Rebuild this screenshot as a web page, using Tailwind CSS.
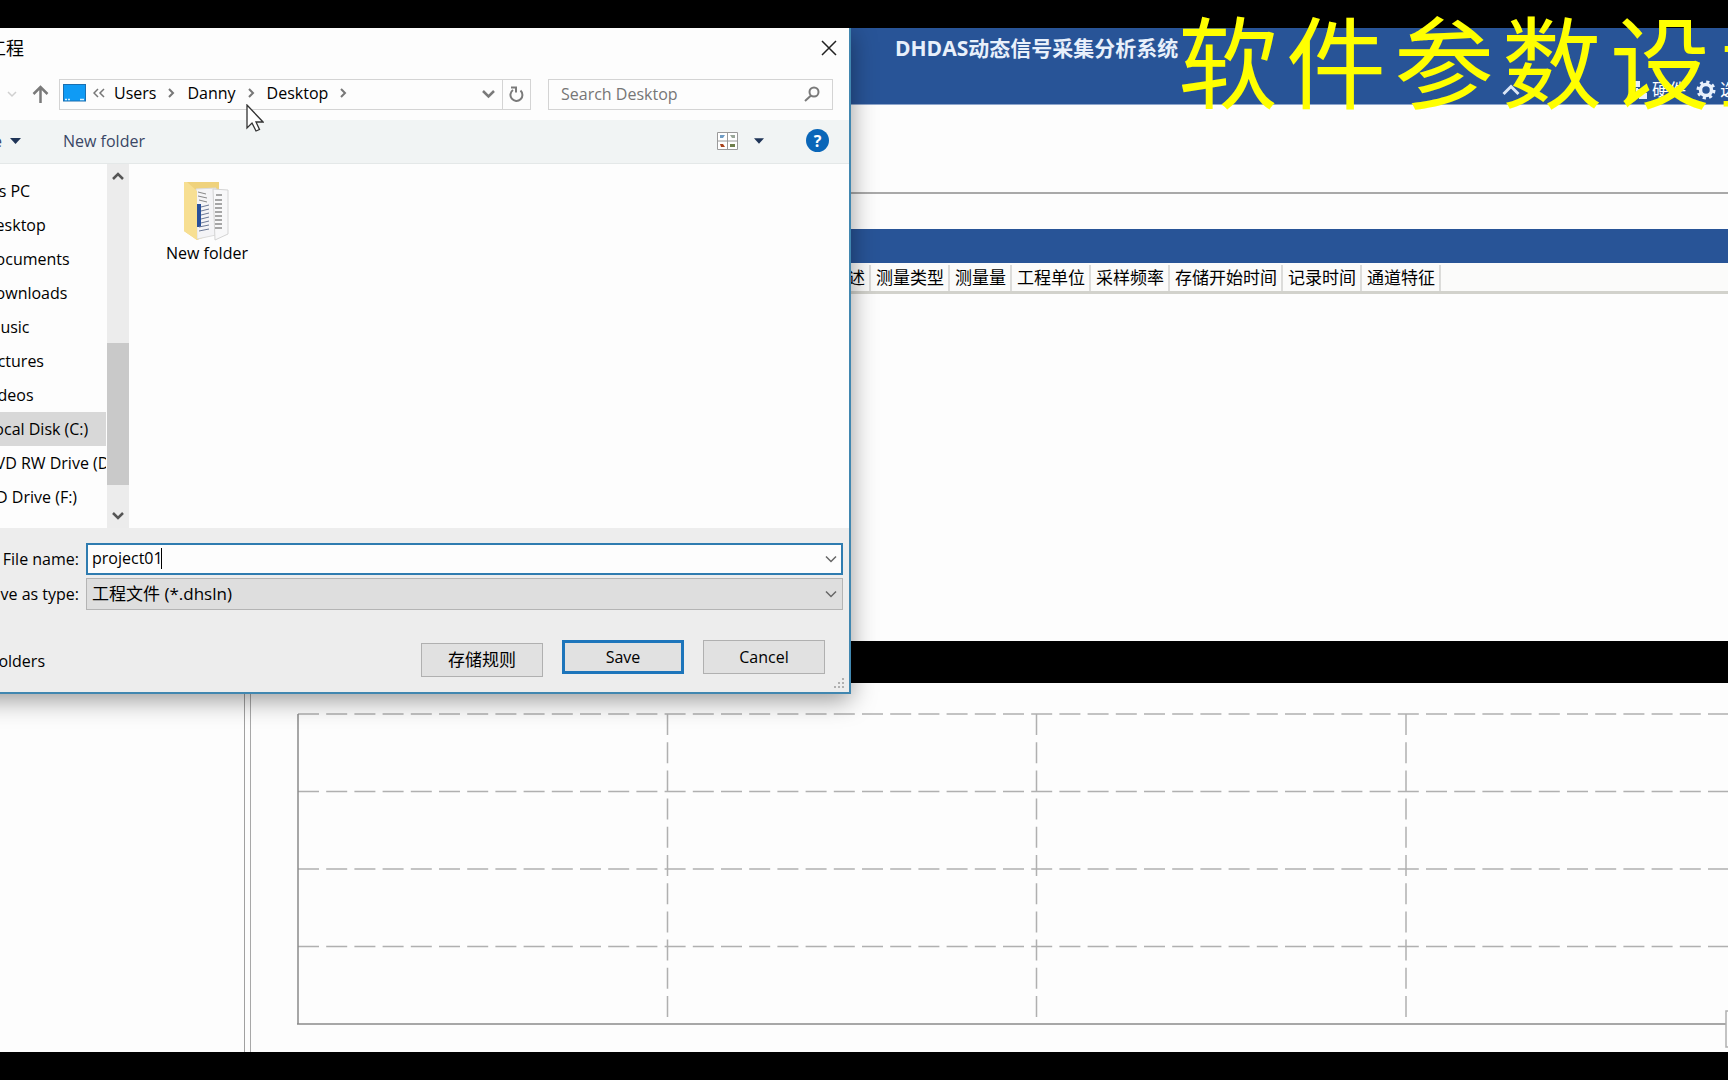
<!DOCTYPE html>
<html lang="zh-CN">
<head>
    <meta charset="UTF-8" />
    <meta name="viewport" content="width=device-width, initial-scale=1" />
    <title>DHDAS动态信号采集分析系统</title>
    <script src="https://cdn.jsdelivr.net/npm/@tailwindcss/browser@4"></script>
</head>
<body class="relative flex min-h-screen flex-col overflow-hidden bg-black py-7 font-['Open_Sans','Noto_Sans_CJK_SC',sans-serif] text-black">

    <!-- Main window: header, channel table -->
    <section class="flex h-[613px] flex-col overflow-hidden bg-[#fdfdfd]">
        <header class="flex h-[77px] shrink-0 flex-col justify-between border-b border-[#8fa6cb] bg-[#285497] text-white">
            <h1 class="pl-[895px] pt-1 text-[21px] leading-8 font-bold text-[#e8f0fb]">DHDAS动态信号采集分析系统</h1>
            <nav class="-mr-[26px] flex h-7 items-center justify-end text-[17px] leading-7">
                <button type="button" class="mr-28" aria-label="收起">
                    <svg class="h-4 w-[18px]" viewBox="0 0 18 16" fill="none" stroke="#dbe6f6" stroke-width="3"><path d="M1.500 12 9 4.500l7.500 7.500" /></svg>
                </button>
                <button type="button" class="mr-[10px] flex items-center gap-1">
                    <svg class="h-[18px] w-4" viewBox="0 0 16 18" fill="#e8f0fb">
                        <rect x="2" y="0" width="6" height="6" /><rect x="10" y="6" width="4" height="4" /><rect x="7" y="12" width="8" height="6" />
                        <path d="M4 7h2v7h1v2H4zM6 8h4v1H6z" />
                    </svg>
                    硬件
                </button>
                <button type="button" class="flex items-center gap-1">
                    <svg class="size-5" viewBox="0 0 20 20" fill="none" stroke="#e8f0fb">
                        <circle cx="10" cy="10" r="5.500" stroke-width="3.500" />
                        <circle cx="10" cy="10" r="8" stroke-width="3" stroke-dasharray="3.140 3.140" />
                    </svg>
                    选项
                </button>
            </nav>
        </header>
        <div class="h-[89px] shrink-0 border-b-2 border-[#a9a9a9]"></div>
        <div class="h-[35px] shrink-0"></div>
        <div class="h-[34px] shrink-0 bg-[#285497]"></div>
        <div class="border-b-3 border-[#d2d2cc] bg-[#fbfbfa] pt-0.5">
            <table class="border-separate border-spacing-0 text-[17px] leading-[26px] whitespace-nowrap">
                <thead>
                    <tr>
                        <th class="w-[871px] min-w-[871px] border-r-2 border-[#dcdcda] pr-1 text-right font-normal">述</th>
                        <th class="border-r-2 border-[#dcdcda] pr-1 pl-[5px] font-normal">测量类型</th>
                        <th class="border-r-2 border-[#dcdcda] pr-1 pl-[5px] font-normal">测量量</th>
                        <th class="border-r-2 border-[#dcdcda] pr-1 pl-[5px] font-normal">工程单位</th>
                        <th class="border-r-2 border-[#dcdcda] pr-1 pl-[5px] font-normal">采样频率</th>
                        <th class="border-r-2 border-[#dcdcda] pr-1 pl-[5px] font-normal">存储开始时间</th>
                        <th class="border-r-2 border-[#dcdcda] pr-1 pl-[5px] font-normal">记录时间</th>
                        <th class="border-r-2 border-[#dcdcda] pr-1 pl-[5px] font-normal">通道特征</th>
                    </tr>
                </thead>
            </table>
        </div>
    </section>

    <!-- Signal plot -->
    <section class="mt-[42px] flex flex-1 bg-[#fdfdfd]">
        <div class="w-[251px] shrink-0 border-r border-[#a8a8a8] pr-[5px]">
            <div class="h-full border-r border-[#a0a0a0]"></div>
        </div>
        <svg class="h-[369px] min-w-0 flex-1" fill="none" stroke="#b0b0b0" stroke-width="1.500">
            <g stroke-dasharray="21 7.200">
                <line x1="47" y1="31" x2="100%" y2="31" />
                <line x1="47" y1="108.500" x2="100%" y2="108.500" />
                <line x1="47" y1="186" x2="100%" y2="186" />
                <line x1="47" y1="263.500" x2="100%" y2="263.500" />
                <line x1="416.500" y1="31" x2="416.500" y2="341" />
                <line x1="785.500" y1="31" x2="785.500" y2="341" />
                <line x1="1155" y1="31" x2="1155" y2="341" />
            </g>
            <line x1="47" y1="31" x2="47" y2="341" stroke="#8a8a8a" />
            <line x1="46" y1="341" x2="100%" y2="341" stroke="#8a8a8a" />
            <svg x="100%" overflow="visible"><rect x="-2" y="328" width="40" height="36" fill="#fdfdfd" /></svg>
        </svg>
    </section>

    <!-- Save dialog, moved partly past the left edge of the screen -->
    <div role="dialog" aria-label="工程" class="absolute top-7 -left-24 flex w-[947px] flex-col border-r-2 border-b-2 border-[#4187b0] bg-[#fdfdfd] text-[16px] leading-6 shadow-[0_6px_24px_rgba(0,0,0,0.4)]">
        <div class="flex h-10 items-center justify-between pr-3 pl-[84px]">
            <span class="text-[18px]">工程</span>
            <button type="button" aria-label="Close">
                <svg class="size-4" viewBox="0 0 16 16" fill="none" stroke="#222" stroke-width="1.500"><path d="M1 1l14 14M15 1 1 15" /></svg>
            </button>
        </div>

        <div class="flex h-[52px] items-center pr-4 pl-[102px]">
            <svg class="h-3 w-3" viewBox="0 0 12 12" fill="none" stroke="#d0d0d0" stroke-width="1.500"><path d="M2 4l4 4 4-4" /></svg>
            <button type="button" class="ml-[14px] mr-[10px]" aria-label="Up">
                <svg class="h-[18px] w-[17px]" viewBox="0 0 17 18" fill="none" stroke="#7a7a7a" stroke-width="2.500"><path d="M8.500 18V2M1.500 9l7-7 7 7" /></svg>
            </button>
            <div class="flex h-[31px] flex-1 items-center border border-[#d4d4d4] pb-0.5">
                <svg class="ml-[3px] h-[18px] w-[23px]" viewBox="0 0 23 18"><rect x="0.500" y="0.500" width="22" height="16.500" fill="#0f9bf5" stroke="#1a6fb0" /><path d="M2 15.500h2M5 15.500h2M17 15.500h4" stroke="#d8f0ff" stroke-width="1.500" /></svg>
                <svg class="ml-[7px] h-2.5 w-3" viewBox="0 0 12 10" fill="none" stroke="#777" stroke-width="1.500"><path d="M5 1 1 5l4 4M11 1 7 5l4 4" /></svg>
                <a href="#" class="ml-[9px]">Users</a>
                <svg class="mr-3 ml-3 h-2.5 w-[7px]" viewBox="0 0 7 10" fill="none" stroke="#777" stroke-width="2"><path d="M1 1l4 4-4 4" /></svg>
                <a href="#">Danny</a>
                <svg class="mr-3 ml-3 h-2.5 w-[7px]" viewBox="0 0 7 10" fill="none" stroke="#777" stroke-width="2"><path d="M1 1l4 4-4 4" /></svg>
                <a href="#">Desktop</a>
                <svg class="mr-3 ml-3 h-2.5 w-[7px]" viewBox="0 0 7 10" fill="none" stroke="#777" stroke-width="2"><path d="M1 1l4 4-4 4" /></svg>
                <button type="button" class="mr-[7px] ml-auto" aria-label="Previous locations">
                    <svg class="h-3 w-[13px]" viewBox="0 0 13 12" fill="none" stroke="#7a7a7a" stroke-width="2.500"><path d="M1 4l5.500 5.500L12 4" /></svg>
                </button>
                <button type="button" class="-mb-0.5 flex h-[29px] w-7 items-center justify-center border-l border-[#d4d4d4]" aria-label="Refresh">
                    <svg class="h-4 w-[15px]" viewBox="0 0 15 16" fill="none" stroke="#7a7a7a" stroke-width="2"><path d="M11.500 4.500a6 6 0 1 1-7.500-.500M2 1.500h5v5" /></svg>
                </button>
            </div>
            <label class="ml-[17px] flex h-[31px] w-[285px] items-center border border-[#d4d4d4] px-3">
                <input type="search" placeholder="Search Desktop" aria-label="Search Desktop" class="min-w-0 flex-1 outline-none placeholder:text-[#767676]" />
                <svg class="size-4" viewBox="0 0 16 16" fill="none" stroke="#7a7a7a" stroke-width="2"><circle cx="10" cy="6" r="4.500" /><path d="M7 9.500 1 15" /></svg>
            </label>
        </div>

        <div class="flex h-11 items-center border-b border-[#e4e8e8] bg-[#f1f4f4] pr-5 pb-0.5 text-[#3a4766]">
            <button type="button" class="flex w-[117px] items-center justify-end gap-2">Organize
                <svg class="h-[6px] w-[11px]" viewBox="0 0 11 6" fill="#1f3457"><path d="M0 0h11L5.500 6z" /></svg>
            </button>
            <button type="button" class="ml-[42px]">New folder</button>
            <button type="button" class="ml-auto flex items-center gap-4" aria-label="Change your view">
                <svg class="h-[18px] w-[21px]" viewBox="0 0 21 18"><path d="M.5.5h20v17H.5zM10.500 0v18M0 9h21" fill="#fff" stroke="#9a9a9a" /><path d="M3 3h5l-2 3H3z" fill="#6f9cc4" /><path d="M13 3h5v3h-3z" fill="#9aa79a" /><path d="M3 12h3l2 3H4z" fill="#a8431c" /><rect x="13" y="12" width="5" height="3" fill="#6f7f4c" /></svg>
                <svg class="h-[6px] w-[10px]" viewBox="0 0 11 6" fill="#1f3457"><path d="M0 0h11L5.500 6z" /></svg>
            </button>
            <button type="button" class="ml-[42px] flex size-[23px] items-center justify-center rounded-full bg-[#0a66b8] font-bold text-white" aria-label="Help">?</button>
        </div>

        <div class="flex h-[364px]">
            <ul class="w-[202px] overflow-hidden pt-[10px] whitespace-nowrap">
                <li class="flex h-[34px] items-center pl-[72px]">This PC</li>
                <li class="flex h-[34px] items-center pl-20">Desktop</li>
                <li class="flex h-[34px] items-center pl-20">Documents</li>
                <li class="flex h-[34px] items-center pl-20">Downloads</li>
                <li class="flex h-[34px] items-center pl-[82px]">Music</li>
                <li class="flex h-[34px] items-center pl-20">Pictures</li>
                <li class="flex h-[34px] items-center pl-20">Videos</li>
                <li class="flex h-[34px] items-center bg-[#d8d8d8] pl-[82px]">Local Disk (C:)</li>
                <li class="flex h-[34px] items-center pl-20">DVD RW Drive (D:)</li>
                <li class="flex h-[34px] items-center pl-[82px]">CD Drive (F:)</li>
            </ul>
            <div class="ml-px flex w-[22px] flex-col items-center bg-[#ececec] py-[6px]">
                <svg class="h-3 w-3" viewBox="0 0 12 12" fill="none" stroke="#555" stroke-width="2.500"><path d="M1 9l5-5 5 5" /></svg>
                <div class="mt-[161px] h-[142px] w-full bg-[#c9c9c9]"></div>
                <svg class="mt-auto h-3 w-3" viewBox="0 0 12 12" fill="none" stroke="#555" stroke-width="2.500"><path d="M1 3l5 5 5-5" /></svg>
            </div>
            <div class="flex-1 pt-[17px] pl-8">
                <figure class="flex w-[92px] flex-col items-center">
                    <svg class="h-[60px] w-[46px]" viewBox="0 0 46 60">
                        <path d="M0 1 35 1v50L13 59 0 50z" fill="#efd27c" />
                        <path d="M12 8 32 7v47L13 58z" fill="#f4f4f6" stroke="#dcdcdc" />
                        <path d="M14 11l8 2M14 15l9 2M15 19l8 2" stroke="#888" />
                        <path d="M13 23h4v23h-4z" fill="#28509a" />
                        <path d="M17 26l8-2M17 30l8-2M17 34l8-2M17 38l8-2M17 42l8-2M15 46l10-2M15 50l10-2" stroke="#6d7a96" />
                        <path d="M29 8 44 9v44l-13 6z" fill="#f8f8f9" stroke="#d4d4d4" />
                        <path d="M32 14h6M31 19h7M31 23h7M31 27h7M31 31h7M31 35h7M31 39h7M31 43h7M31 47h7" stroke="#8a8a8a" stroke-width="1.500" />
                        <path d="M0 1 3 1l10 9v49L0 50z" fill="#f7df92" />
                    </svg>
                    <figcaption>New folder</figcaption>
                </figure>
            </div>
        </div>

        <form class="bg-[#ededed] pt-[15px] pr-[6px]">
            <div class="flex h-8 items-center">
                <label for="file-name" class="w-[175px] shrink-0 text-right">File name:</label>
                <div class="relative ml-[7px] flex-1">
                    <input id="file-name" type="text" value="project01" class="block h-8 w-full border-2 border-[#2f7cb0] bg-[#fdfdfd] px-1 pb-0.5 outline-none" />
                    <!-- text caret -->
                    <span class="absolute top-[5px] left-[75px] h-[21px] w-px bg-black"></span>
                    <svg class="absolute top-2.5 right-1.5 h-3 w-3" viewBox="0 0 12 12" fill="none" stroke="#666" stroke-width="1.500"><path d="M1 3.500l5 5 5-5" /></svg>
                </div>
            </div>
            <div class="mt-[3px] flex h-8 items-center">
                <label for="file-type" class="w-[175px] shrink-0 text-right">Save as type:</label>
                <div class="relative ml-[7px] flex-1">
                    <select id="file-type" class="block h-8 w-full appearance-none border border-[#b4b4b4] bg-[#dedede] px-[5px] text-[17px] outline-none">
                        <option>工程文件 (*.dhsln)</option>
                    </select>
                    <svg class="pointer-events-none absolute top-2.5 right-1.5 h-3 w-3" viewBox="0 0 12 12" fill="none" stroke="#666" stroke-width="1.500"><path d="M1 3.500l5 5 5-5" /></svg>
                </div>
            </div>
            <div class="flex items-start gap-[19px] pt-[30px] pr-[18px]">
                <button type="button" class="mr-auto h-[42px] w-[141px] text-right">Hide Folders</button>
                <button type="button" class="mt-[3px] h-[34px] w-[122px] border border-[#b0b0b0] bg-[#e1e1e1] text-[17px]">存储规则</button>
                <button type="submit" class="h-[34px] w-[122px] border-3 border-[#1d75bb] bg-[#e1e1e1]">Save</button>
                <button type="button" class="h-[34px] w-[122px] border border-[#b0b0b0] bg-[#e1e1e1]">Cancel</button>
            </div>
            <svg class="-mt-1 -mr-0.5 mb-0.5 ml-auto h-3 w-3" viewBox="0 0 12 12" fill="#b0b0b0"><path d="M9 0h2v2H9zM9 4h2v2H9zM5 4h2v2H5zM9 8h2v2H9zM5 8h2v2H5zM1 8h2v2H1z" /></svg>
        </form>
    </div>

    <!-- Mouse pointer -->
    <svg class="absolute top-[104px] left-[246px] h-7 w-[18px]" viewBox="0 0 18 28" fill="#fff" stroke="#333" stroke-width="1.300"><path d="M1 1v23l5-5 4 8 3.500-1.500L10 18h7z" /></svg>

    <!-- Video caption -->
    <p class="absolute top-2 left-[1178px] flex gap-2 font-['Noto_Sans_CJK_SC',sans-serif] text-[100px] leading-[100px] whitespace-nowrap text-[#ffff00]">
        <span>软</span><span>件</span><span>参</span><span>数</span><span>设</span><span>置</span>
    </p>
</body>
</html>
